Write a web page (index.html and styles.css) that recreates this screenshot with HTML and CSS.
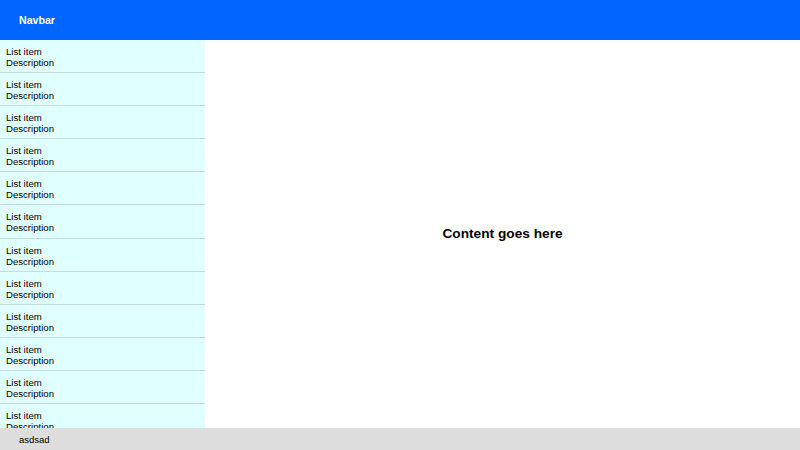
FILE: index.html
```html
<!DOCTYPE html>
<html>
<head>
<meta charset="utf-8">
<link rel="stylesheet" href="styles.css">
</head>
<body>
<div class="app">
  <header class="navbar">Navbar</header>
  <div class="main">
    <aside class="sidebar">
      <div class="item"><div>List item</div><div>Description</div></div>
      <div class="item"><div>List item</div><div>Description</div></div>
      <div class="item"><div>List item</div><div>Description</div></div>
      <div class="item"><div>List item</div><div>Description</div></div>
      <div class="item"><div>List item</div><div>Description</div></div>
      <div class="item"><div>List item</div><div>Description</div></div>
      <div class="item"><div>List item</div><div>Description</div></div>
      <div class="item"><div>List item</div><div>Description</div></div>
      <div class="item"><div>List item</div><div>Description</div></div>
      <div class="item"><div>List item</div><div>Description</div></div>
      <div class="item"><div>List item</div><div>Description</div></div>
      <div class="item"><div>List item</div><div>Description</div></div>
      <div class="item"><div>List item</div><div>Description</div></div>
      <div class="item"><div>List item</div><div>Description</div></div>
    </aside>
    <section class="content">Content goes here</section>
  </div>
  <footer class="footer">asdsad</footer>
</div>
</body>
</html>
```
FILE: styles.css
```css
html, body {
  margin: 0;
  padding: 0;
  height: 100%;
  font-family: "Liberation Sans", Arial, sans-serif;
  color: #000;
}
.app {
  display: flex;
  flex-direction: column;
  height: 100vh;
  overflow: hidden;
}
.navbar {
  flex: 0 0 40px;
  background: #0066ff;
  color: #fff;
  font-weight: bold;
  font-size: 10.6px;
  display: flex;
  align-items: center;
  padding-left: 19px;
}
.main {
  flex: 1;
  display: flex;
  min-height: 0;
  overflow: hidden;
}
.sidebar {
  flex: 0 0 205px;
  background: #e0ffff;
  overflow: hidden;
}
.item {
  padding: 6px 6px 4.1px;
  font-size: 9.6px;
  line-height: 11px;
  border-bottom: 1px solid #c4dcdc;
}
.content {
  flex: 1;
  display: flex;
  align-items: center;
  justify-content: center;
  font-weight: bold;
  font-size: 13.7px;
  padding-bottom: 2px;
}
.footer {
  flex: 0 0 22px;
  background: #dddddd;
  font-size: 9.5px;
  display: flex;
  align-items: center;
  padding-left: 19px;
}
```
